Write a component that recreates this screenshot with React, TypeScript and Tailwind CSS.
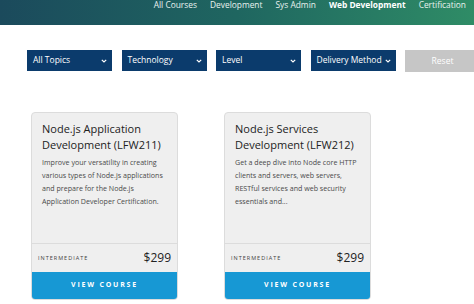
const navItems = ["All Courses", "Development", "Sys Admin", "Web Development", "Certification"];
const filters = ["All Topics", "Technology", "Level", "Delivery Method"];

const courses = [
  {
    title: "Node.js Application Development (LFW211)",
    text: "Improve your versatility in creating various types of Node.js applications and prepare for the Node.js Application Developer Certification.",
  },
  {
    title: "Node.js Services Development (LFW212)",
    text: "Get a deep dive into Node core HTTP clients and servers, web servers, RESTful services and web security essentials and...",
  },
];

function Chevron() {
  return (
    <svg width="6" height="4" viewBox="0 0 6 4" fill="none">
      <path d="M0.8 0.8 L3 3 L5.2 0.8" stroke="white" strokeWidth="1.2" />
    </svg>
  );
}

export default function App() {
  return (
    <div className="w-[474px] h-[304px] overflow-hidden bg-white font-['Open_Sans',sans-serif]">
      {/* header */}
      <div className="h-[25px] bg-gradient-to-r from-[#1b4a5c] via-[#1f6660] to-[#2f8c66] flex justify-end gap-[13px] pr-[8px] text-[8.4px] leading-[10px] text-[#e8f2ef] whitespace-nowrap">
        {navItems.map((n) => (
          <span key={n} className={n === "Web Development" ? "font-bold text-white" : ""}>
            {n}
          </span>
        ))}
      </div>

      {/* filters */}
      <div className="flex gap-[9.5px] pl-[27px] mt-[25px]">
        {filters.map((f) => (
          <div
            key={f}
            className="w-[85px] h-[21px] shrink-0 bg-[#0b3b6c] flex items-center justify-between pl-[6px] pr-[5px] text-[8.5px] text-white whitespace-nowrap"
          >
            <span>{f}</span>
            <Chevron />
          </div>
        ))}
        <div className="w-[75px] h-[22px] bg-[#c6c6c6] flex items-center justify-center text-[8.5px] text-white shrink-0">
          Reset
        </div>
      </div>

      {/* cards */}
      <div className="flex gap-[46px] pl-[31px] mt-[40px]">
        {courses.map((c) => (
          <div
            key={c.title}
            className="w-[147px] h-[188px] rounded-[4px] border border-[#dcdcdc] bg-[#efefef] flex flex-col overflow-hidden"
          >
            <div className="flex-1 pl-[10px] pr-[5px] pt-[8px]">
              <h3 className="text-[11px] leading-[16px] text-[#222]">{c.title}</h3>
              <p className="mt-[3px] text-[7.1px] leading-[13px] text-[#4a4a4a]">{c.text}</p>
            </div>
            <div className="h-[29px] border-t border-[#dcdcdc] flex items-center justify-between px-[6px]">
              <span className="text-[5.5px] tracking-[1px] text-[#444]">INTERMEDIATE</span>
              <span className="text-[12px] text-[#222]">$299</span>
            </div>
            <div className="h-[27px] bg-[#1798d4] flex items-center justify-center text-[7px] font-bold tracking-[1.8px] text-white">
              VIEW COURSE
            </div>
          </div>
        ))}
      </div>
    </div>
  );
}
